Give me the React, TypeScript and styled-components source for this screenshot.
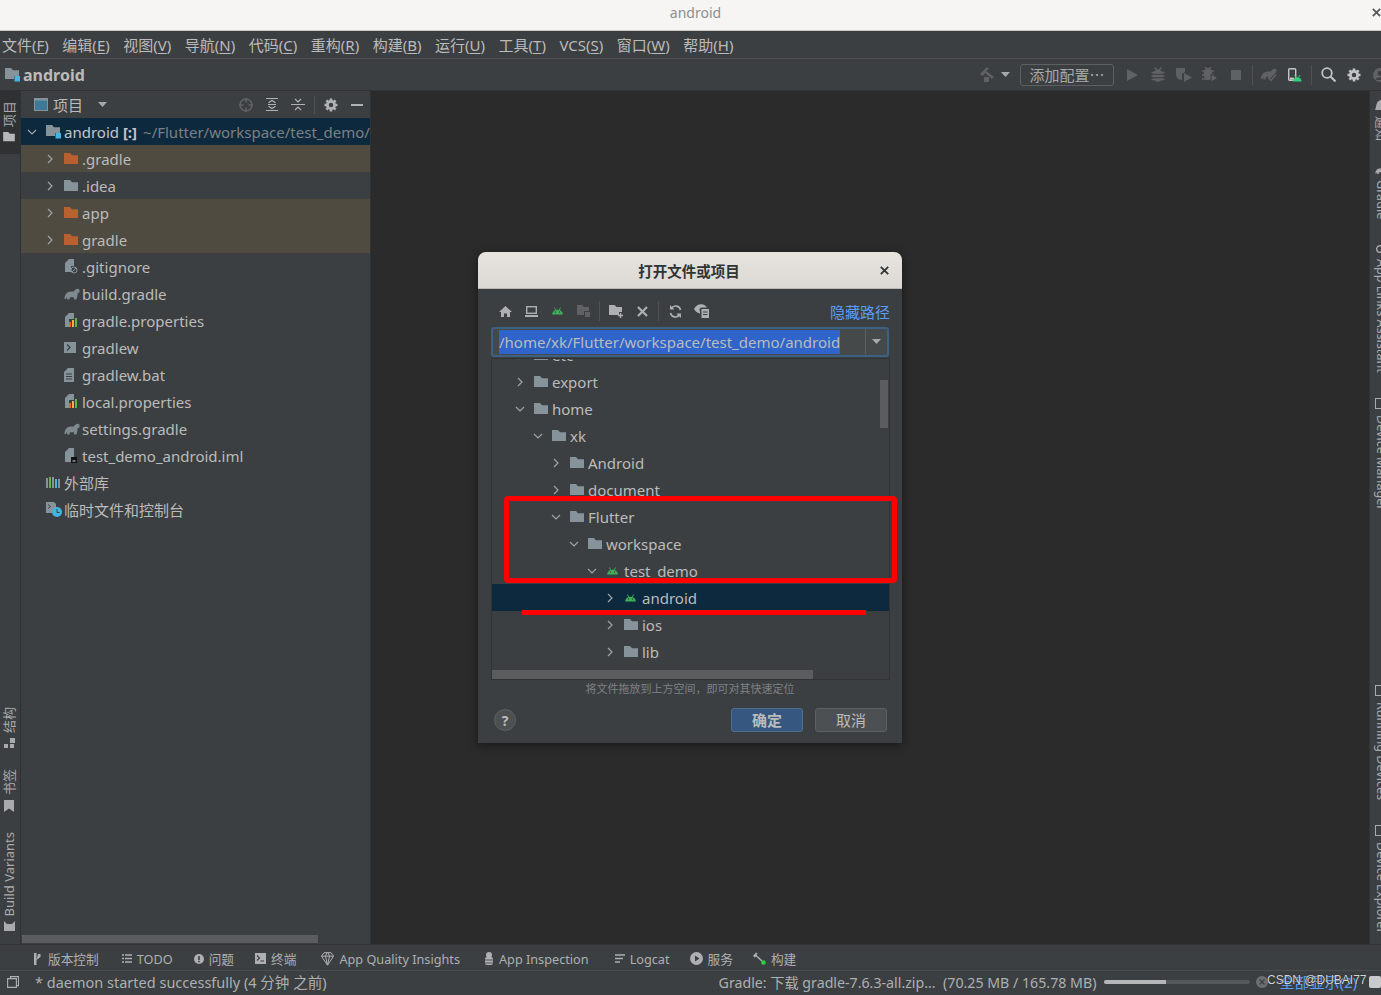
import React from 'react';
import styled, { createGlobalStyle } from 'styled-components';

const GlobalStyle = createGlobalStyle`
  html, body {
    margin: 0;
    padding: 0;
    width: 100%;
    height: 100%;
    overflow: hidden;
    background: #2b2b2b;
  }
  * { box-sizing: border-box; }
  body {
    font-family: "Noto Sans", "Noto Sans CJK SC", sans-serif;
    font-size: 15px;
    color: #bbbbbb;
  }
`;

const GREY = '#87939a';
const ORANGE = '#b8602f';
const GREEN = '#3dae5b';
const BLUE = '#40b6e0';

// ---- icons ----
type IconProps = { c?: string; s?: number };

const Svg = styled.svg`
  display: block;
  flex: none;
`;

const Folder = ({ c = GREY }: IconProps) => (
  <Svg width="14" height="12" viewBox="0 0 14 12">
    <path d="M0 0h6l2 2.2h6V11H0z" fill={c} />
  </Svg>
);

const ModuleFolder = () => (
  <Svg width="15" height="14" viewBox="0 0 15 14">
    <path d="M0 0h6l2 2.2h6V8H9v3H0z" fill={GREY} />
    <rect x="9.5" y="8" width="5.5" height="5.5" fill={BLUE} />
  </Svg>
);

const Chevron = ({ open }: { open?: boolean }) => (
  <Svg width="10" height="10" viewBox="0 0 10 10">
    <path
      d={open ? 'M1 3l4 4 4-4' : 'M3 1l4 4-4 4'}
      fill="none"
      stroke="#a0a3a5"
      strokeWidth="1.2"
    />
  </Svg>
);

const Android = ({ c = GREEN }: IconProps) => (
  <Svg width="13" height="8" viewBox="-1 0 14 9">
    <path d="M0 8.500a6 5.500 0 0 1 12 0z" fill={c} />
    <path d="M2.500 0.500l1.500 3M9.500 0.500l-1.500 3" stroke={c} strokeWidth="1" />
    <rect x="3" y="5" width="1.300" height="1.300" fill="#3c3f41" />
    <rect x="7.700" y="5" width="1.300" height="1.300" fill="#3c3f41" />
  </Svg>
);

const Elephant = ({ c = '#7f8a90', s = 16 }: IconProps) => (
  <Svg width={s} height={s * 0.75} viewBox="0 0 16 12">
    <path
      d="M0.5 11C0.5 6.500 3 3.500 7 3.500H10C11 1.500 13 0.500 14.600 1 15.800 1.500 15.800 3.500 15.200 4.500L13.600 5.200C13.600 8 13 9.500 12.500 11.500H10.200L9.800 9.200H6L5.500 11.500H3.300L3 9.200C2.500 9.600 2 10.200 2 11z"
      fill={c}
    />
  </Svg>
);

const FileBase = () => <path d="M0 4l4-4h6v14H0z" fill={GREY} />;

const IgnoreFile = () => (
  <Svg width="14" height="15" viewBox="0 0 14 15">
    <path d="M1 4l4-4h5v7H7v6H1z" fill={GREY} />
    <circle cx="10" cy="11" r="3" fill="#3c3f41" stroke={GREY} strokeWidth="1" />
    <path d="M8 13l4-4" stroke={GREY} strokeWidth="1" />
  </Svg>
);

const PropsFile = () => (
  <Svg width="14" height="15" viewBox="0 0 14 15">
    <path d="M1 4l4-4h5v6H5v8H1z" fill={GREY} />
    <rect x="5" y="9" width="2" height="5" fill="#f26522" />
    <rect x="8" y="7" width="2" height="7" fill="#f4af3d" />
    <rect x="11" y="5" width="2" height="9" fill="#62b543" />
  </Svg>
);

const ScriptFile = () => (
  <Svg width="12" height="11" viewBox="0 0 12 11">
    <rect width="12" height="11" fill={GREY} />
    <path d="M3 2.500l3 3-3 3" fill="none" stroke="#3c3f41" strokeWidth="1.400" />
  </Svg>
);

const TextFile = () => (
  <Svg width="10" height="14" viewBox="0 0 10 14">
    <FileBase />
    <path d="M2 6h6M2 8.500h6M2 11h6" stroke="#3c3f41" strokeWidth="1" />
  </Svg>
);

const ImlFile = () => (
  <Svg width="14" height="15" viewBox="0 0 14 15">
    <path d="M1 4l4-4h5v9H7v5H1z" fill={GREY} />
    <rect x="7" y="9" width="6" height="6" fill="#111" />
    <rect x="8.500" y="12.500" width="3" height="1" fill="#ddd" />
  </Svg>
);

const Library = () => (
  <Svg width="14" height="12" viewBox="0 0 14 12">
    <rect x="0" y="1" width="2" height="10" fill={GREY} />
    <rect x="3" y="0" width="2" height="11" fill="#62b543" />
    <rect x="6" y="0" width="2" height="11" fill={GREY} />
    <rect x="9" y="2" width="2" height="9" fill={BLUE} />
    <rect x="12" y="2" width="2" height="9" fill={GREY} />
  </Svg>
);

const Scratch = () => (
  <Svg width="16" height="15" viewBox="0 0 16 15">
    <path d="M0 0h8l2 2v4a5 5 0 0 0-3 5H0z" fill={GREY} />
    <path d="M2 2.500l2.500 2L2 6.500" fill="none" stroke="#3c3f41" strokeWidth="1" />
    <circle cx="11" cy="10" r="5" fill={BLUE} />
    <path d="M11 7v3.500h2.500" fill="none" stroke="#3c3f41" strokeWidth="1" />
  </Svg>
);

const Caret = ({ c = '#a7a9ab' }: IconProps) => (
  <Svg width="9" height="5" viewBox="0 0 9 5">
    <path d="M0 0h9L4.500 5z" fill={c} />
  </Svg>
);

const Gear = ({ c = '#b0b2b4', s = 14 }: IconProps) => (
  <Svg width={s} height={s} viewBox="0 0 14 14">
    <circle cx="7" cy="7" r="3.600" fill="none" stroke={c} strokeWidth="2.800" />
    <path
      d="M7 .5v2.500M7 11v2.500M.5 7H3M11 7h2.500M2.400 2.400l1.800 1.800M9.800 9.800l1.800 1.800M11.600 2.400L9.800 4.200M4.200 9.800l-1.800 1.800"
      stroke={c}
      strokeWidth="2.600"
    />
  </Svg>
);

const D = '#5f6163';

const Hammer = () => (
  <Svg width="15" height="15" viewBox="0 0 15 15">
    <path d="M0 7L7 0l2 2-3 2 8 6-2 2-7-6-2 3z" fill={D} />
    <rect x="4" y="10" width="5" height="5" fill={D} />
  </Svg>
);

const Play = () => (
  <Svg width="11" height="12" viewBox="0 0 11 12">
    <path d="M0 0l11 6-11 6z" fill={D} />
  </Svg>
);

const Bug = () => (
  <Svg width="14" height="15" viewBox="0 0 14 15">
    <ellipse cx="7" cy="8.500" rx="4.800" ry="6.300" fill={D} />
    <path d="M.5 5.500h13M.5 9h13M.5 12.500h13M3.500.5l2.500 2.500M10.500.5L8 3" stroke={D} strokeWidth="1.400" />
    <path d="M3 7.300h8M3 10.800h8" stroke="#3c3f41" strokeWidth="1" />
  </Svg>
);

const Coverage = () => (
  <Svg width="16" height="15" viewBox="0 0 16 15">
    <path d="M0 1h9v4L6 7v6C2 13 0 10 0 7z" fill={D} />
    <path d="M8 6l8 4.500L8 15z" fill={D} />
  </Svg>
);

const Profile = () => (
  <Svg width="16" height="15" viewBox="0 0 16 15">
    <ellipse cx="6" cy="7" rx="4.300" ry="6" fill={D} />
    <path d="M0 4h12M0 8h12M0 12h12M3 0l2 2M9 0L7 2" stroke={D} strokeWidth="1.300" />
    <path d="M9 7l7 4-7 4z" fill={D} stroke="#3c3f41" strokeWidth="1" />
  </Svg>
);

const Stop = () => (
  <Svg width="10" height="10" viewBox="0 0 10 10">
    <rect width="10" height="10" fill={D} />
  </Svg>
);

const SyncGradle = () => (
  <Svg width="16" height="14" viewBox="0 0 16 14">
    <path
      d="M0 11C0 6.500 3 3.500 7 3.500H10C11 1.500 13 .5 14.600 1 15.800 1.500 15.800 3.500 15.200 4.500L13.600 5.200 13.500 6 9 10.500 7 8.500H5.500L4.500 11.500H2.500L2.300 9.500C1.500 10 1 10.500 1 11z"
      fill={D}
    />
    <path d="M7 9.500l3 3 5-6" fill="none" stroke={D} strokeWidth="1.500" />
  </Svg>
);

const DeviceManager = () => (
  <Svg width="14" height="14" viewBox="0 0 14 14">
    <rect x="0.700" y="0.700" width="7" height="11.600" rx="1" fill="none" stroke="#c4c6c8" strokeWidth="1.400" />
    <rect x="2" y="9.600" width="4" height="2" fill="#c4c6c8" />
    <path d="M5 13.500a4.300 4.300 0 0 1 8.600 0z" fill="#2fd17c" />
    <path d="M6.500 7l1.500 2.500M12 7l-1.500 2.500" stroke="#2fd17c" strokeWidth="1" />
  </Svg>
);

const Search = () => (
  <Svg width="15" height="15" viewBox="0 0 15 15">
    <circle cx="6" cy="6" r="4.800" fill="none" stroke="#c0c2c4" strokeWidth="1.800" />
    <path d="M9.500 9.500l5 5" stroke="#c0c2c4" strokeWidth="2" />
  </Svg>
);

const Avatar = () => (
  <Svg width="14" height="14" viewBox="0 0 14 14">
    <circle cx="7" cy="7" r="7" fill={D} />
    <circle cx="7" cy="5.400" r="2.400" fill="#3c3f41" />
    <path d="M2.600 12a4.600 4 0 0 1 8.800 0z" fill="#3c3f41" />
  </Svg>
);

const ProjectView = () => (
  <Svg width="14" height="13" viewBox="0 0 14 13">
    <rect x="0.500" y="0.500" width="13" height="12" fill="#3d7a99" stroke={GREY} />
    <rect x="0.500" y="0.500" width="13" height="2" fill={GREY} />
  </Svg>
);

const Target = () => (
  <Svg width="14" height="14" viewBox="0 0 14 14">
    <circle cx="7" cy="7" r="6" fill="none" stroke={D} strokeWidth="1.600" />
    <path d="M7 0v4.500M7 9.500V14M0 7h4.500M9.500 7H14" stroke={D} strokeWidth="1.600" />
  </Svg>
);

const ExpandAll = () => (
  <Svg width="14" height="13" viewBox="0 0 14 13">
    <path d="M1 .5h12M1 12.500h12M3.500 4.800L7 2.500l3.500 2.300M3.500 8.200L7 10.500l3.500-2.300M3 6.500h8" fill="none" stroke="#b0b2b4" strokeWidth="1.100" />
  </Svg>
);

const CollapseAll = () => (
  <Svg width="14" height="13" viewBox="0 0 14 13">
    <path d="M0 6.500h14M4 1l3 3 3-3M4 12l3-3 3 3" fill="none" stroke="#b0b2b4" strokeWidth="1.200" />
  </Svg>
);

const Minus = () => (
  <Svg width="12" height="2" viewBox="0 0 12 2">
    <rect width="12" height="2" fill="#b0b2b4" />
  </Svg>
);

const Close = ({ c = '#2e3436', s = 9 }: IconProps) => (
  <Svg width={s} height={s} viewBox="0 0 9 9">
    <path d="M.8.8l7.400 7.400M8.200.8L.8 8.200" stroke={c} strokeWidth="1.800" />
  </Svg>
);

const Light = '#adafb1';

const HomeIcon = () => (
  <Svg width="13" height="11" viewBox="0 0 13 11">
    <path d="M6.500 0L13 6h-2v5H8V7.500H5V11H2V6H0z" fill={Light} />
  </Svg>
);

const Computer = () => (
  <Svg width="13" height="11" viewBox="0 0 13 11">
    <rect x="1.700" y=".7" width="9.600" height="6.600" fill="none" stroke={Light} strokeWidth="1.400" />
    <rect x="0" y="9" width="13" height="2" fill={Light} />
  </Svg>
);

const DimFolder = () => (
  <Svg width="13" height="12" viewBox="0 0 13 12">
    <path d="M0 0h5l2 2h5v4H7v4H0z" fill={D} />
    <rect x="8" y="7" width="5" height="5" fill={D} />
  </Svg>
);

const NewFolder = () => (
  <Svg width="15" height="13" viewBox="0 0 15 13">
    <path d="M0 0h5.500l2 2H13v5h-3v3H0z" fill={Light} />
    <path d="M11.500 8v5M9 10.500h5" stroke={Light} strokeWidth="1.400" />
  </Svg>
);

const Refresh = () => (
  <Svg width="13" height="13" viewBox="0 0 13 13">
    <path d="M11.500 5A5 5 0 0 0 2.500 3.200M1.500 8a5 5 0 0 0 9 1.800" fill="none" stroke={Light} strokeWidth="1.600" />
    <path d="M1 0v4.500h4.500zM12 13V8.500H7.500z" fill={Light} />
  </Svg>
);

const EyeDoc = () => (
  <Svg width="15" height="14" viewBox="0 0 15 14">
    <path d="M0 5C2 1.500 5-.5 9 .5c2 .5 3 1.700 4 3h-5a2.500 2.500 0 0 0-2 4v2C3.500 9 1.500 7.500 0 5z" fill={Light} />
    <rect x="7.500" y="5" width="7.500" height="9" fill={Light} />
    <path d="M9 8h4.500M9 10.500h4.500" stroke="#3c3f41" strokeWidth="1" />
  </Svg>
);

const Branch = () => (
  <Svg width="10" height="12" viewBox="0 0 10 12">
    <path d="M1 0h2.500v12H1zM5 1h2.500v3L3.500 7z" fill={Light} />
  </Svg>
);

const ListIcon = () => (
  <Svg width="10" height="9" viewBox="0 0 10 9">
    <path d="M0 1h2M3 1h7M0 4.500h2M3 4.500h7M0 8h2M3 8h7" stroke={Light} strokeWidth="1.400" />
  </Svg>
);

const Problem = () => (
  <Svg width="10" height="10" viewBox="0 0 10 10">
    <circle cx="5" cy="5" r="5" fill={Light} />
    <rect x="4.200" y="2" width="1.600" height="4" fill="#3c3f41" />
    <rect x="4.200" y="6.800" width="1.600" height="1.500" fill="#3c3f41" />
  </Svg>
);

const Terminal = () => (
  <Svg width="11" height="11" viewBox="0 0 11 11">
    <rect width="11" height="11" fill={Light} />
    <path d="M2 2.500l2.500 2.500L2 7.500M5.500 8H9" fill="none" stroke="#3c3f41" strokeWidth="1.200" />
  </Svg>
);

const Diamond = () => (
  <Svg width="13" height="14" viewBox="0 0 13 14">
    <path d="M3 .7h7l2.500 3.500-6 9-6-9zM.5 4.200h12M4.500 4.200L6.500 13l2-8.800M4.500 4.200L6 .7M8.500 4.200L7 .7" fill="none" stroke={Light} strokeWidth="1" />
  </Svg>
);

const Inspection = () => (
  <Svg width="10" height="13" viewBox="0 0 10 13">
    <circle cx="5" cy="3" r="3" fill={Light} />
    <rect x="1" y="5" width="8" height="8" rx="2" fill={Light} />
    <path d="M0 8h10M0 11h10" stroke="#3c3f41" strokeWidth=".8" />
  </Svg>
);

const LogIcon = () => (
  <Svg width="10" height="9" viewBox="0 0 10 9">
    <path d="M0 1h10M0 4.500h8M0 8h5" stroke={Light} strokeWidth="1.500" />
  </Svg>
);

const ServiceIcon = () => (
  <Svg width="13" height="13" viewBox="0 0 13 13">
    <circle cx="6.500" cy="6.500" r="6.500" fill={Light} />
    <path d="M5 3.500l4.500 3-4.500 3z" fill="#3c3f41" />
  </Svg>
);

const BuildIcon = () => (
  <Svg width="13" height="13" viewBox="0 0 13 13">
    <path d="M0 4l3-3.500 1.500 1-1 1.500 6 5.500-1 1L3 4.500 1.500 5.500z" fill={Light} />
    <circle cx="10.500" cy="10.500" r="2.300" fill="#27d13f" />
  </Svg>
);

const Frame = () => (
  <Svg width="12" height="12" viewBox="0 0 12 12">
    <path d="M3.500 2.500V.6h8v9H9.500M.6 2.600h8.800v8.800H.6z" fill="none" stroke={Light} strokeWidth="1.100" />
  </Svg>
);

// ---- window chrome ----
const Page = styled.div`
  position: relative;
  display: flex;
  flex-direction: column;
  width: 100%;
  height: 100vh;
  overflow: hidden;
`;

const TitleBar = styled.div`
  position: relative;
  flex: none;
  display: flex;
  align-items: center;
  justify-content: center;
  height: 31px;
  padding: 0 0 5px 10px;
  background: #f6f5f4;
  border-bottom: 1px solid #cdc7c2;
  color: #8d8f8f;
  font-size: 14px;
`;

const TitleClose = styled.span`
  position: absolute;
  right: 0;
  top: 8px;
`;

const MenuBar = styled.div`
  flex: none;
  display: flex;
  gap: 13.500px;
  align-items: center;
  height: 28px;
  padding-left: 2px;
  background: #3c3f41;
  border-bottom: 1px solid #515151;
  u { text-underline-offset: 2px; }
`;

const NavBar = styled.div`
  flex: none;
  display: flex;
  align-items: center;
  height: 32px;
  margin-right: -12px;
  padding: 0 0 0 5px;
  background: #3c3f41;
  border-bottom: 1px solid #323232;
`;

const NavTitle = styled.span`
  margin-left: 3px;
  font-weight: 700;
  font-size: 16px;
  flex: 1;
`;

const NavIcon = styled.span<{ $w?: number }>`
  flex: none;
  width: ${(p) => p.$w ?? 26}px;
  height: 24px;
  display: flex;
  align-items: center;
  justify-content: center;
`;

const ToolSep = styled.span`
  flex: none;
  width: 1px;
  height: 20px;
  margin: 0 3px;
  background: #515151;
`;

const ConfigButton = styled.button`
  flex: none;
  width: 94px;
  height: 22px;
  margin: 0 5px 0 10px;
  padding: 0;
  background: transparent;
  border: 1px solid #5e6060;
  border-radius: 3px;
  color: #a6a8aa;
  font: inherit;
  line-height: 20px;
`;

const Main = styled.div`
  flex: 1;
  min-height: 0;
  display: flex;
`;

// ---- side stripes ----
const LeftStripe = styled.div`
  flex: none;
  width: 21px;
  display: flex;
  flex-direction: column;
  justify-content: space-between;
  background: #3c3f41;
  border-right: 1px solid #2f3234;
  padding-bottom: 13px;
`;

const StripeGroup = styled.div`
  display: flex;
  flex-direction: column;
`;

const StripeButton = styled.div<{ $active?: boolean; $mt?: number }>`
  display: flex;
  flex-direction: column;
  align-items: center;
  gap: 5px;
  padding: ${(p) => (p.$active ? '10px 2px 12px 0' : '0 2px 0 0')};
  margin-top: ${(p) => p.$mt ?? 0}px;
  background: ${(p) => (p.$active ? '#2f3133' : 'transparent')};
  font-size: 13px;
  line-height: 14px;
`;

const SideLabel = styled.span`
  writing-mode: vertical-rl;
  text-orientation: sideways;
  transform: rotate(180deg);
  color: #a8aaac;
`;

const RightStripe = styled.div`
  flex: none;
  width: 12px;
  display: flex;
  flex-direction: column;
  justify-content: space-between;
  padding: 9px 0 10px 5px;
  background: #3c3f41;
  border-left: 1px solid #323232;
  overflow: hidden;
  font-size: 12.600px;
  line-height: 14px;
`;

const RightGroup = styled.div`
  display: flex;
  flex-direction: column;
  gap: 25px;
`;

const RightItem = styled.div`
  display: flex;
  flex-direction: column;
  align-items: flex-start;
  gap: 6px;
  width: 20px;
  color: #a8aaac;
`;

const RightLabel = styled.span`
  writing-mode: vertical-rl;
  text-orientation: sideways;
  white-space: nowrap;
  margin-left: -1px;
`;

const StripeSquare = styled.span`
  display: block;
  width: 11px;
  height: 11px;
  border: 1.500px solid #a8aaac;
  background: transparent;
`;

// ---- project panel ----
const ProjectPanel = styled.div`
  position: relative;
  flex: none;
  width: 350px;
  background: #3c3f41;
  border-right: 1px solid #323232;
  display: flex;
  flex-direction: column;
`;

const PanelHeader = styled.div`
  flex: none;
  display: flex;
  align-items: center;
  height: 27px;
  padding-left: 13px;
`;

const PanelTitle = styled.span`
  margin-left: 5px;
  font-size: 15px;
`;

const PanelCaret = styled.span`
  margin-left: 15px;
  flex: 1;
`;

const PanelTool = styled.span`
  flex: none;
  width: 26px;
  display: flex;
  justify-content: center;
`;

const PanelSep = styled.span`
  flex: none;
  width: 1px;
  height: 18px;
  margin: 0 3px;
  background: #515151;
`;

const TreeRow = styled.div<{ $depth: number; $bg?: string; $base?: number }>`
  display: flex;
  align-items: center;
  height: 27px;
  padding-left: ${(p) => (p.$base ?? 2) + p.$depth * 18}px;
  background: ${(p) => p.$bg ?? 'transparent'};
  white-space: nowrap;
  overflow: hidden;
`;

const ChevronSlot = styled.span`
  flex: none;
  width: 23px;
  padding-left: 4px;
`;

const IconSlot = styled.span`
  flex: none;
  width: 18px;
  height: 16px;
  display: flex;
  align-items: center;
`;

const RootName = styled.span`
  color: #c4c6c8;
`;

const RootMark = styled.span`
  font-weight: 700;
`;

const PathHint = styled.span`
  margin-left: 6px;
  color: #7d8083;
`;

const HScroll = styled.div`
  position: absolute;
  left: 1px;
  bottom: 1px;
  width: 296px;
  height: 8px;
  background: #5a5c5e;
`;

const Editor = styled.div`
  flex: 1;
  background: #2b2b2b;
`;

// ---- bottom bars ----
const ToolWindowBar = styled.div`
  flex: none;
  display: flex;
  align-items: center;
  height: 27px;
  padding: 2px 0 0 33px;
  background: #3c3f41;
  border-top: 1px solid #323232;
  border-bottom: 1px solid #4b4d4f;
  font-size: 12.700px;
  color: #adafb1;
`;

const ToolTab = styled.span<{ $ml: number }>`
  display: flex;
  align-items: center;
  gap: 5px;
  margin-left: ${(p) => p.$ml}px;
`;

const StatusBar = styled.div`
  position: relative;
  flex: none;
  display: flex;
  align-items: center;
  height: 24px;
  padding: 0 0 3px 7px;
  background: #3c3f41;
  color: #adafb1;
  font-size: 14.500px;
  white-space: nowrap;
`;

const StatusMessage = styled.span`
  margin-left: 16px;
  flex: 1;
`;

const StatusTask = styled.span`
  margin-right: 8px;
  font-size: 14.200px;
`;

const ProgressTrack = styled.div`
  flex: none;
  width: 146px;
  height: 4px;
  border-radius: 2px;
  background: #55585a;
  overflow: hidden;
`;

const ProgressFill = styled.div`
  height: 100%;
  background: #b4b6b8;
`;

const CancelDot = styled.span`
  flex: none;
  display: flex;
  align-items: center;
  justify-content: center;
  width: 12px;
  height: 12px;
  margin: 0 11px 0 6px;
  border-radius: 50%;
  background: #6c6e70;
`;

const ShowAll = styled.span`
  flex: none;
  color: #589df6;
  font-size: 15px;
`;

const WarnBox = styled.span`
  flex: none;
  display: block;
  width: 12px;
  height: 12px;
  margin-left: 12px;
  border-radius: 2px;
  background: #c8cacc;
`;

const Watermark = styled.span`
  position: absolute;
  left: 1267px;
  top: 2px;
  font-family: "Liberation Sans", sans-serif;
  font-size: 12px;
  color: #d4d4d4;
  text-shadow: 0 0 1px #1c1c1c;
  white-space: nowrap;
`;

// ---- dialog ----
const Dialog = styled.div`
  position: absolute;
  left: 478px;
  top: 252px;
  width: 424px;
  height: 491px;
  display: flex;
  flex-direction: column;
  background: #3c3f41;
  border-radius: 8px 8px 0 0;
  box-shadow: 0 2px 10px rgba(0, 0, 0, 0.45);
`;

const DialogHead = styled.div`
  position: relative;
  flex: none;
  display: flex;
  align-items: center;
  justify-content: center;
  height: 37px;
  padding-right: 2px;
  background: linear-gradient(#e7e3df, #dcd8d3);
  border-radius: 8px 8px 0 0;
  border-bottom: 1px solid #bdb8b3;
  color: #2e3436;
  font-weight: 700;
  font-size: 14.500px;
`;

const DialogClose = styled.span`
  position: absolute;
  right: 13px;
  top: 14px;
`;

const DialogTools = styled.div`
  flex: none;
  display: flex;
  align-items: center;
  height: 38px;
  padding: 6px 12px 0 14px;
`;

const DialogTool = styled.span<{ $w?: number }>`
  flex: none;
  width: ${(p) => p.$w ?? 26}px;
  display: flex;
  justify-content: center;
`;

const DialogSep = styled.span`
  flex: none;
  width: 1px;
  height: 20px;
  margin: 0 3px;
  background: #515151;
`;

const HidePath = styled.a`
  margin-left: auto;
  color: #589df6;
  font-size: 15px;
`;

const PathInput = styled.div`
  flex: none;
  display: flex;
  align-items: stretch;
  height: 30px;
  margin: 0 13px;
  padding-bottom: 1px;
  background: #45494a;
  border: 2px solid #3d6185;
  border-radius: 3px;
`;

const PathText = styled.div`
  flex: 1;
  display: flex;
  align-items: center;
  padding-left: 6px;
`;

const Selected = styled.span`
  display: block;
  background: #2f65ca;
  color: #bbbbbb;
  line-height: 24px;
  height: 24px;
  white-space: nowrap;
`;

const PathArrow = styled.div`
  flex: none;
  width: 22px;
  display: flex;
  align-items: center;
  justify-content: center;
  border-left: 1px solid #5e6060;
`;

const TreeBox = styled.div`
  position: relative;
  flex: none;
  height: 322px;
  margin: 1px 12px 0 13px;
  border: 1px solid #323232;
  overflow: hidden;
`;

const TreeScroll = styled.div`
  margin-top: -18px;
`;

const VScrollThumb = styled.div`
  position: absolute;
  right: 1px;
  top: 21px;
  width: 8px;
  height: 48px;
  background: #5a5c5e;
`;

const HScrollThumb = styled.div`
  position: absolute;
  left: 0;
  bottom: 0;
  width: 321px;
  height: 9px;
  background: #5a5c5e;
`;

const Hint = styled.div`
  flex: none;
  height: 18px;
  text-align: center;
  font-size: 11px;
  line-height: 18px;
  color: #7e8184;
`;

const DialogFoot = styled.div`
  flex: none;
  display: flex;
  align-items: center;
  gap: 12px;
  padding: 10px 15px 0 16px;
`;

const HelpButton = styled.span`
  flex: none;
  width: 22px;
  height: 22px;
  margin-right: auto;
  border-radius: 50%;
  display: flex;
  align-items: center;
  justify-content: center;
  background: #4c5052;
  border: 1px solid #5e6060;
  color: #bbbbbb;
  font-weight: 700;
  font-size: 14px;
`;

const DialogButton = styled.button<{ $primary?: boolean }>`
  flex: none;
  width: 72px;
  height: 24px;
  padding: 0;
  border-radius: 3px;
  border: 1px solid ${(p) => (p.$primary ? '#4c708c' : '#5e6060')};
  background: ${(p) => (p.$primary ? '#365880' : '#4c5052')};
  color: #bbbbbb;
  font: inherit;
  font-weight: ${(p) => (p.$primary ? 700 : 400)};
  line-height: 22px;
`;

const RedBox = styled.div`
  position: absolute;
  left: 26px;
  top: 244px;
  width: 393px;
  height: 87px;
  border: 5px solid #ff0000;
  border-radius: 4px;
  pointer-events: none;
`;

const RedLine = styled.div`
  position: absolute;
  left: 44px;
  top: 358px;
  width: 344px;
  height: 5px;
  background: #ff0000;
  pointer-events: none;
`;

// ---- data ----
const menus: [string, string][] = [
  ['文件', 'F'], ['编辑', 'E'], ['视图', 'V'], ['导航', 'N'], ['代码', 'C'], ['重构', 'R'],
  ['构建', 'B'], ['运行', 'U'], ['工具', 'T'], ['VCS', 'S'], ['窗口', 'W'], ['帮助', 'H'],
];

type Row = {
  name: string;
  depth: number;
  icon: React.ReactNode;
  chevron?: 'open' | 'closed';
  bg?: string;
};

const EXCLUDED = '#4f4b41';

const projectRows: Row[] = [
  { name: '.gradle', depth: 1, icon: <Folder c={ORANGE} />, chevron: 'closed', bg: EXCLUDED },
  { name: '.idea', depth: 1, icon: <Folder />, chevron: 'closed' },
  { name: 'app', depth: 1, icon: <Folder c={ORANGE} />, chevron: 'closed', bg: EXCLUDED },
  { name: 'gradle', depth: 1, icon: <Folder c={ORANGE} />, chevron: 'closed', bg: EXCLUDED },
  { name: '.gitignore', depth: 1, icon: <IgnoreFile /> },
  { name: 'build.gradle', depth: 1, icon: <Elephant /> },
  { name: 'gradle.properties', depth: 1, icon: <PropsFile /> },
  { name: 'gradlew', depth: 1, icon: <ScriptFile /> },
  { name: 'gradlew.bat', depth: 1, icon: <TextFile /> },
  { name: 'local.properties', depth: 1, icon: <PropsFile /> },
  { name: 'settings.gradle', depth: 1, icon: <Elephant /> },
  { name: 'test_demo_android.iml', depth: 1, icon: <ImlFile /> },
  { name: '外部库', depth: 0, icon: <Library /> },
  { name: '临时文件和控制台', depth: 0, icon: <Scratch /> },
];

const dialogRows: Row[] = [
  { name: 'etc', depth: 0, icon: <Folder />, chevron: 'closed' },
  { name: 'export', depth: 0, icon: <Folder />, chevron: 'closed' },
  { name: 'home', depth: 0, icon: <Folder />, chevron: 'open' },
  { name: 'xk', depth: 1, icon: <Folder />, chevron: 'open' },
  { name: 'Android', depth: 2, icon: <Folder />, chevron: 'closed' },
  { name: 'document', depth: 2, icon: <Folder />, chevron: 'closed' },
  { name: 'Flutter', depth: 2, icon: <Folder />, chevron: 'open' },
  { name: 'workspace', depth: 3, icon: <Folder />, chevron: 'open' },
  { name: 'test_demo', depth: 4, icon: <Android />, chevron: 'open' },
  { name: 'android', depth: 5, icon: <Android />, chevron: 'closed', bg: '#0d293e' },
  { name: 'ios', depth: 5, icon: <Folder />, chevron: 'closed' },
  { name: 'lib', depth: 5, icon: <Folder />, chevron: 'closed' },
  { name: 'test', depth: 5, icon: <Folder />, chevron: 'closed' },
];

const tabs: { label: string; icon: React.ReactNode; ml: number }[] = [
  { label: '版本控制', icon: <Branch />, ml: 0 },
  { label: 'TODO', icon: <ListIcon />, ml: 23 },
  { label: '问题', icon: <Problem />, ml: 21 },
  { label: '终端', icon: <Terminal />, ml: 21 },
  { label: 'App Quality Insights', icon: <Diamond />, ml: 25 },
  { label: 'App Inspection', icon: <Inspection />, ml: 24 },
  { label: 'Logcat', icon: <LogIcon />, ml: 26 },
  { label: '服务', icon: <ServiceIcon />, ml: 20 },
  { label: '构建', icon: <BuildIcon />, ml: 20 },
];

const renderRow = (row: Row, base?: number) => (
  <TreeRow key={row.name} $depth={row.depth} $bg={row.bg} $base={base}>
    <ChevronSlot>{row.chevron && <Chevron open={row.chevron === 'open'} />}</ChevronSlot>
    <IconSlot>{row.icon}</IconSlot>
    {row.name}
  </TreeRow>
);

const App = () => {
  return (
    <Page>
      <GlobalStyle />
      <TitleBar>
        android
        <TitleClose><Close c="#55595a" /></TitleClose>
      </TitleBar>

      <MenuBar>
        {menus.map(([label, key]) => (
          <span key={key}>
            {label}(<u>{key}</u>)
          </span>
        ))}
      </MenuBar>

      <NavBar>
        <ModuleFolder />
        <NavTitle>android</NavTitle>
        <NavIcon><Hammer /></NavIcon>
        <NavIcon $w={10}><Caret /></NavIcon>
        <ConfigButton>添加配置⋯</ConfigButton>
        <NavIcon><Play /></NavIcon>
        <NavIcon><Bug /></NavIcon>
        <NavIcon><Coverage /></NavIcon>
        <NavIcon><Profile /></NavIcon>
        <NavIcon><Stop /></NavIcon>
        <ToolSep />
        <NavIcon><SyncGradle /></NavIcon>
        <NavIcon><DeviceManager /></NavIcon>
        <ToolSep />
        <NavIcon><Search /></NavIcon>
        <NavIcon>
          <Gear c="#c0c2c4" />
        </NavIcon>
        <NavIcon><Avatar /></NavIcon>
      </NavBar>

      <Main>
        <LeftStripe>
          <StripeGroup>
            <StripeButton $active>
              <SideLabel>项目</SideLabel>
              <Svg width="12" height="10" viewBox="0 0 14 12">
                <path d="M0 0h6l2 2.200h6V11H0z" fill="#b5b7b9" />
              </Svg>
            </StripeButton>
          </StripeGroup>
          <StripeGroup>
            <StripeButton>
              <SideLabel>结构</SideLabel>
              <Svg width="11" height="11" viewBox="0 0 11 11">
                <path d="M6 0h5v5H6zM0 6h4v4H0zM6 6h4v4H6z" fill="#a8aaac" />
              </Svg>
            </StripeButton>
            <StripeButton $mt={20}>
              <SideLabel>书签</SideLabel>
              <Svg width="10" height="12" viewBox="0 0 10 12">
                <path d="M0 0h10v12L5 8.500 0 12z" fill="#a8aaac" />
              </Svg>
            </StripeButton>
            <StripeButton $mt={20}>
              <SideLabel>Build Variants</SideLabel>
              <Svg width="11" height="10" viewBox="0 0 11 10">
                <path d="M0 10V0l3 3h5l3-3v10z" fill="#a8aaac" />
              </Svg>
            </StripeButton>
          </StripeGroup>
        </LeftStripe>

        <ProjectPanel>
          <PanelHeader>
            <ProjectView />
            <PanelTitle>项目</PanelTitle>
            <PanelCaret><Caret /></PanelCaret>
            <PanelTool><Target /></PanelTool>
            <PanelTool><ExpandAll /></PanelTool>
            <PanelTool><CollapseAll /></PanelTool>
            <PanelSep />
            <PanelTool><Gear /></PanelTool>
            <PanelTool><Minus /></PanelTool>
          </PanelHeader>
          <TreeRow $depth={0} $bg="#0d293e">
            <ChevronSlot><Chevron open /></ChevronSlot>
            <IconSlot><ModuleFolder /></IconSlot>
            <RootName>android <RootMark>[:]</RootMark></RootName>
            <PathHint>~/Flutter/workspace/test_demo/</PathHint>
          </TreeRow>
          {projectRows.map((row) => renderRow(row))}
          <HScroll />
        </ProjectPanel>

        <Editor />

        <RightStripe>
          <RightGroup>
            <RightItem>
              <Svg width="12" height="10" viewBox="0 0 12 10"><path d="M0 10c1-2 1-5 2-7s3-3 5-3 4 2 4 5v5z" fill="#a8aaac" /></Svg>
              <RightLabel>通知</RightLabel>
            </RightItem>
            <RightItem>
              <Elephant c="#a8aaac" s={11} />
              <RightLabel>Gradle</RightLabel>
            </RightItem>
            <RightItem>
              <Svg width="10" height="8" viewBox="0 0 10 8"><circle cx="5" cy="4" r="3.300" fill="none" stroke="#a8aaac" strokeWidth="1.400" /></Svg>
              <RightLabel>App Links Assistant</RightLabel>
            </RightItem>
            <RightItem>
              <StripeSquare />
              <RightLabel>Device Manager</RightLabel>
            </RightItem>
          </RightGroup>
          <RightGroup>
            <RightItem>
              <StripeSquare />
              <RightLabel>Running Devices</RightLabel>
            </RightItem>
            <RightItem>
              <StripeSquare />
              <RightLabel>Device Explorer</RightLabel>
            </RightItem>
          </RightGroup>
        </RightStripe>
      </Main>

      <ToolWindowBar>
        {tabs.map((t) => (
          <ToolTab key={t.label} $ml={t.ml}>
            {t.icon}
            {t.label}
          </ToolTab>
        ))}
      </ToolWindowBar>

      <StatusBar>
        <Frame />
        <StatusMessage>* daemon started successfully (4 分钟 之前)</StatusMessage>
        <StatusTask>Gradle: 下载 gradle-7.6.3-all.zip...&nbsp;&nbsp;(70.25 MB / 165.78 MB)</StatusTask>
        <ProgressTrack>
          <ProgressFill style={{ width: `${(70.25 / 165.78) * 100}%` }} />
        </ProgressTrack>
        <CancelDot><Close c="#3c3f41" s={6} /></CancelDot>
        <ShowAll>全部显示(2)</ShowAll>
        <WarnBox />
        <Watermark>CSDN @DUBAI77</Watermark>
      </StatusBar>

      <Dialog>
        <DialogHead>
          打开文件或项目
          <DialogClose><Close /></DialogClose>
        </DialogHead>
        <DialogTools>
          <DialogTool><HomeIcon /></DialogTool>
          <DialogTool><Computer /></DialogTool>
          <DialogTool><Android /></DialogTool>
          <DialogTool><DimFolder /></DialogTool>
          <DialogSep />
          <DialogTool><NewFolder /></DialogTool>
          <DialogTool><Close c={Light} s={11} /></DialogTool>
          <DialogSep />
          <DialogTool><Refresh /></DialogTool>
          <DialogTool><EyeDoc /></DialogTool>
          <HidePath>隐藏路径</HidePath>
        </DialogTools>
        <PathInput>
          <PathText>
            <Selected>/home/xk/Flutter/workspace/test_demo/android</Selected>
          </PathText>
          <PathArrow><Caret /></PathArrow>
        </PathInput>
        <TreeBox>
          <TreeScroll>{dialogRows.map((row) => renderRow(row, 19))}</TreeScroll>
          <VScrollThumb />
          <HScrollThumb />
        </TreeBox>
        <Hint>将文件拖放到上方空间，即可对其快速定位</Hint>
        <DialogFoot>
          <HelpButton>?</HelpButton>
          <DialogButton $primary>确定</DialogButton>
          <DialogButton>取消</DialogButton>
        </DialogFoot>
        <RedBox />
        <RedLine />
      </Dialog>
    </Page>
  );
};

export default App;
